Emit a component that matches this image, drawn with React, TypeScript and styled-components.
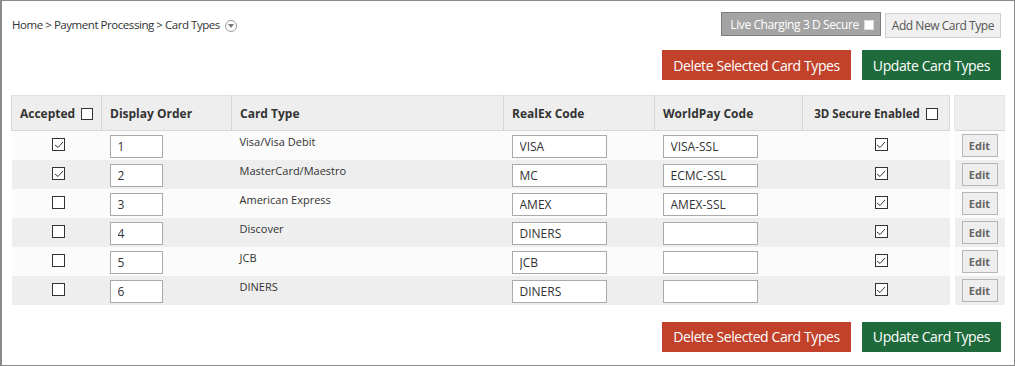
import React from 'react';
import styled, { createGlobalStyle } from 'styled-components';

const GlobalStyle = createGlobalStyle`
  html, body {
    margin: 0;
    padding: 0;
    background: #fff;
  }
  body {
    font-family: 'Open Sans', 'Liberation Sans', sans-serif;
    color: #333;
  }
`;

const Frame = styled.div`
  box-sizing: border-box;
  width: 1015px;
  height: 366px;
  border: 1px solid #8a8a8a;
  border-left-width: 2px;
  padding: 0 9px 0 9px;
`;

const TopBar = styled.div`
  display: flex;
  justify-content: space-between;
  align-items: flex-start;
  padding-top: 11px;
  height: 27px;
`;

const Breadcrumb = styled.div`
  display: flex;
  align-items: center;
  gap: 5px;
  font-size: 11.5px;
  color: #333;
  margin-top: 5px;
  margin-left: 1px;
  letter-spacing: -0.45px;
`;

const DropIcon = styled.span`
  display: inline-flex;
  align-items: center;
  justify-content: center;
  width: 12px;
  height: 12px;
  border: 1px solid #9a9a9a;
  border-radius: 50%;
  box-sizing: border-box;
  margin-top: 2px;
`;

const TopButtons = styled.div`
  display: flex;
  gap: 4px;
  margin-right: 4px;
`;

const LiveToggle = styled.label`
  display: flex;
  align-items: center;
  gap: 5px;
  height: 24px;
  box-sizing: border-box;
  padding: 0 6px 0 8px;
  background: #a4a4a4;
  border: 1px solid #7c7c7c;
  color: #fff;
  font-size: 12px;
  letter-spacing: -0.4px;
`;

const WhiteBox = styled.span`
  display: inline-block;
  width: 10px;
  height: 10px;
  background: #fff;
  border: 1px solid #ddd;
  box-sizing: border-box;
  margin-top: 1px;
`;

const LightButton = styled.button`
  height: 25px;
  margin-top: 1px;
  padding: 0 6px;
  background: #f0f0f0;
  border: 1px solid #cfcfcf;
  color: #555;
  font-family: inherit;
  font-size: 12px;
  letter-spacing: -0.45px;
`;

const ActionBar = styled.div<{ $top: number }>`
  display: flex;
  justify-content: flex-end;
  gap: 11px;
  margin-top: ${p => p.$top}px;
  padding-right: 4px;
`;

const ActionButton = styled.button<{ $tone: 'danger' | 'ok' }>`
  height: 30px;
  padding: 0 11px;
  border: none;
  color: #fff;
  font-family: inherit;
  font-size: 14px;
  letter-spacing: -0.4px;
  background: ${p => (p.$tone === 'danger' ? '#c1412a' : '#1e6a3b')};
`;

const Table = styled.table`
  margin-top: 15px;
  width: 993px;
  border-collapse: collapse;
  table-layout: fixed;
`;

const Th = styled.th<{ $center?: boolean; $small?: boolean }>`
  height: 35px;
  box-sizing: border-box;
  background: #eee;
  border: 1px solid #d6d6d6;
  border-top-color: #e2e2e2;
  text-align: ${p => (p.$center ? 'center' : 'left')};
  padding: 0 8px;
  font-size: ${p => (p.$small ? '11.5px' : '12px')};
  font-weight: 700;
  color: #333;
  white-space: nowrap;
`;

const SpacerTh = styled.th`
  background: #fff;
  border: none;
  border-bottom: 1px solid #fff;
`;

const EditTh = styled.th`
  background: #eee;
  border: 1px solid #e4e4e4;
  border-bottom: 1px solid #d6d6d6;
`;

const HeadBox = styled.span`
  display: inline-block;
  vertical-align: -2px;
  width: 12px;
  height: 12px;
  margin-left: 6px;
  border: 1px solid #333;
  background: #fff;
  box-sizing: border-box;
`;

const Row = styled.tr<{ $shade: boolean }>`
  height: 29px;
  background: ${p => (p.$shade ? '#eeeeee' : '#fbfbfb')};
`;

const Td = styled.td<{ $center?: boolean; $top?: boolean }>`
  padding: 0 8px;
  text-align: ${p => (p.$center ? 'center' : 'left')};
  vertical-align: ${p => (p.$top ? 'top' : 'middle')};
  font-size: 11px;
  color: #333;
`;

const NameCell = styled(Td)`
  padding-top: 3px;
`;

const SpacerTd = styled.td`
  background: #fff;
`;

const EditTd = styled.td<{ $shade: boolean }>`
  background: ${p => (p.$shade ? '#eeeeee' : '#fbfbfb')};
  text-align: center;
  vertical-align: middle;
`;

const CheckCell = styled.span<{ $shift: number }>`
  display: inline-flex;
  align-items: center;
  justify-content: center;
  width: 13px;
  height: 13px;
  box-sizing: border-box;
  border: 1px solid #333;
  background: #fff;
  margin-left: ${p => p.$shift}px;
  margin-top: -4px;
  vertical-align: middle;
`;

const TextInput = styled.input<{ $w: number }>`
  box-sizing: border-box;
  width: ${p => p.$w}px;
  height: 23px;
  margin-top: 3px;
  padding: 0 0 0 7px;
  border: 1px solid #a9a9a9;
  background: #fff;
  font-family: inherit;
  font-size: 12px;
  color: #333;
  outline: none;
`;

const EditButton = styled.button`
  width: 36px;
  height: 23px;
  padding: 0;
  margin-top: 1px;
  border: 1px solid #b5b5b5;
  background: #eeeeee;
  color: #666;
  font-family: inherit;
  font-size: 11px;
  font-weight: 700;
`;

const Tick = () => (
  <svg width="10" height="8" viewBox="0 0 10 8">
    <path d="M1 4 L4 6.5 L9 1" fill="none" stroke="#333" strokeWidth="1" />
  </svg>
);

const Check = ({ on, shift }: { on: boolean; shift: number }) => (
  <CheckCell $shift={shift}>{on ? <Tick /> : null}</CheckCell>
);

type Card = {
  accepted: boolean;
  order: string;
  name: string;
  realex: string;
  worldpay: string;
};

const cards: Card[] = [
  { accepted: true, order: '1', name: 'Visa/Visa Debit', realex: 'VISA', worldpay: 'VISA-SSL' },
  { accepted: true, order: '2', name: 'MasterCard/Maestro', realex: 'MC', worldpay: 'ECMC-SSL' },
  { accepted: false, order: '3', name: 'American Express', realex: 'AMEX', worldpay: 'AMEX-SSL' },
  { accepted: false, order: '4', name: 'Discover', realex: 'DINERS', worldpay: '' },
  { accepted: false, order: '5', name: 'JCB', realex: 'JCB', worldpay: '' },
  { accepted: false, order: '6', name: 'DINERS', realex: 'DINERS', worldpay: '' },
];

const Actions = ({ top }: { top: number }) => (
  <ActionBar $top={top}>
    <ActionButton $tone="danger">Delete Selected Card Types</ActionButton>
    <ActionButton $tone="ok">Update Card Types</ActionButton>
  </ActionBar>
);

export default function App() {
  return (
    <>
      <GlobalStyle />
      <Frame>
        <TopBar>
          <Breadcrumb>
            <span>Home &gt; Payment Processing &gt; Card Types</span>
            <DropIcon>
              <svg width="6" height="4" viewBox="0 0 6 4">
                <path d="M0 0 L6 0 L3 4 Z" fill="#777" />
              </svg>
            </DropIcon>
          </Breadcrumb>
          <TopButtons>
            <LiveToggle>
              Live Charging 3 D Secure <WhiteBox />
            </LiveToggle>
            <LightButton>Add New Card Type</LightButton>
          </TopButtons>
        </TopBar>

        <Actions top={11} />

        <Table>
          <colgroup>
            <col style={{ width: 90 }} />
            <col style={{ width: 130 }} />
            <col style={{ width: 272 }} />
            <col style={{ width: 151 }} />
            <col style={{ width: 148 }} />
            <col style={{ width: 147 }} />
            <col style={{ width: 5 }} />
            <col style={{ width: 50 }} />
          </colgroup>
          <thead>
            <tr>
              <Th>
                Accepted<HeadBox />
              </Th>
              <Th>Display Order</Th>
              <Th>Card Type</Th>
              <Th>RealEx Code</Th>
              <Th>WorldPay Code</Th>
              <Th $center $small>
                3D Secure Enabled<HeadBox />
              </Th>
              <SpacerTh />
              <EditTh />
            </tr>
          </thead>
          <tbody>
            {cards.map((c, i) => {
              const shade = i % 2 === 1;
              return (
                <Row key={c.order} $shade={shade}>
                  <Td $center>
                    <Check on={c.accepted} shift={4} />
                  </Td>
                  <Td>
                    <TextInput $w={53} defaultValue={c.order} />
                  </Td>
                  <NameCell $top>{c.name}</NameCell>
                  <Td>
                    <TextInput $w={95} defaultValue={c.realex} />
                  </Td>
                  <Td>
                    <TextInput $w={95} defaultValue={c.worldpay} />
                  </Td>
                  <Td $center>
                    <Check on shift={10} />
                  </Td>
                  <SpacerTd />
                  <EditTd $shade={shade}>
                    <EditButton>Edit</EditButton>
                  </EditTd>
                </Row>
              );
            })}
          </tbody>
        </Table>

        <Actions top={17} />
      </Frame>
    </>
  );
}
